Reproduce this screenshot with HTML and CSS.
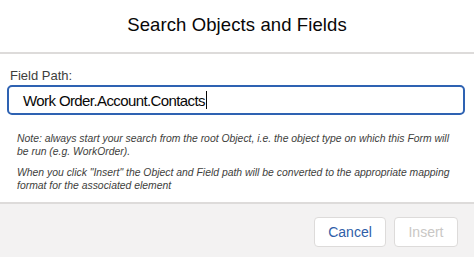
FILE: index.html
```html
<!DOCTYPE html>
<html>
<head>
<meta charset="utf-8">
<link rel="stylesheet" href="styles.css">
</head>
<body>
<div class="modal">
  <header class="modal-header">
    <h2 class="title">Search Objects and Fields</h2>
  </header>
  <section class="modal-body">
    <label class="field-label">Field Path:</label>
    <div class="input"><span class="input-text">Work Order.Account.Contacts</span><span class="caret"></span></div>
    <div class="notes">
      <p class="note">Note: always start your search from the root Object, i.e. the object type on which this Form will<br>be run (e.g. WorkOrder).</p>
      <p class="note">When you click "Insert" the Object and Field path will be converted to the appropriate mapping format for the associated element</p>
    </div>
  </section>
  <footer class="modal-footer">
    <button class="btn btn-cancel">Cancel</button>
    <button class="btn btn-insert">Insert</button>
  </footer>
</div>
</body>
</html>
```
FILE: styles.css
```css
html, body {
  margin: 0;
  padding: 0;
  background: #ffffff;
}
body {
  font-family: "Liberation Sans", Arial, sans-serif;
  color: #181818;
  width: 474px;
  height: 257px;
  overflow: hidden;
}
.modal {
  display: flex;
  flex-direction: column;
  height: 257px;
}
.modal-header {
  display: flex;
  align-items: center;
  justify-content: center;
  border-bottom: 2px solid #dddbda;
  box-sizing: border-box;
  height: 54px;
}
.title {
  margin: 0;
  font-weight: 400;
  font-size: 18.5px;
  letter-spacing: 0.1px;
  color: #080707;
  padding-bottom: 3px;
}
.modal-body {
  padding: 14px 9px 0 7px;
  height: 148px;
  box-sizing: border-box;
}
.field-label {
  display: block;
  font-size: 13px;
  color: #3e3e3c;
  padding-left: 3px;
  line-height: 16px;
}
.input {
  margin-top: 1px;
  height: 30px;
  box-sizing: border-box;
  border: 2px solid #2e62b2;
  border-radius: 5px;
  display: flex;
  align-items: center;
  padding-left: 14px;
}
.input-text {
  font-size: 15px;
  letter-spacing: -0.6px;
  color: #080707;
}
.caret {
  width: 1px;
  height: 18px;
  background: #080707;
  margin-left: 1px;
}
.notes {
  padding: 17px 0 0 10px;
}
.note {
  margin: 0 0 8px 0;
  font-size: 10.4px;
  line-height: 13px;
  font-style: italic;
  color: #3e3e3c;
}
.modal-footer {
  flex: 1;
  border-top: 2px solid #dddbda;
  background: #f3f2f2;
  display: flex;
  justify-content: flex-end;
  align-items: center;
  gap: 8px;
  padding: 2px 16px 0 0;
}
.btn {
  font-family: "Liberation Sans", Arial, sans-serif;
  font-size: 14px;
  height: 30px;
  border-radius: 4px;
  border: 1px solid #dddbda;
  background: #ffffff;
  padding: 0;
}
.btn-cancel {
  width: 72px;
  color: #2f5ea8;
}
.btn-insert {
  width: 64px;
  color: #c9c7c5;
}
```
